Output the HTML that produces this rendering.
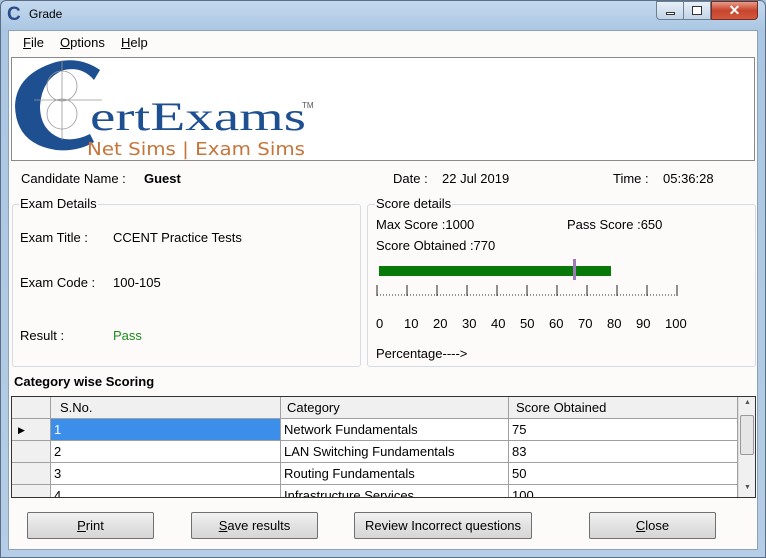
<!DOCTYPE html><html><head><style>
*{margin:0;padding:0;box-sizing:border-box}
body{width:766px;height:558px;overflow:hidden;background:#a9c4de;font-family:"Liberation Sans",sans-serif;font-size:13px;color:#000;position:relative}
.a{position:absolute;white-space:nowrap}
.frame{position:absolute;left:0;top:0;width:766px;height:558px;background:linear-gradient(180deg,#c4d9ee 0,#aac6e2 30px,#b5cde6 100%);border:1px solid #5b6f86;border-radius:6px 6px 0 0}
.client{position:absolute;left:8px;top:30px;width:750px;height:520px;background:#fdfafa;border:1px solid #8ea2b7}
.grp{position:absolute;border:1px solid #d5dbe3;border-radius:3px}
.btn{position:absolute;height:27px;border:1px solid #707070;border-radius:2px;background:linear-gradient(#f2f2f2,#e2e2e2 50%,#d6d6d6);text-align:center;line-height:25px;font-size:13px}
.cell{position:absolute;height:22px;border-right:1px solid #a0a0a0;border-bottom:1px solid #a0a0a0;padding-left:3px;line-height:22px;background:#fff}
</style></head><body>
<div class="frame"></div>
<div class="a" style="left:7px;top:4px;font-size:19px;font-weight:bold;color:#2a4d8a">C</div>
<div class="a" style="left:29px;top:7px;font-size:12px">Grade</div>
<div class="a" style="left:656px;top:1px;width:28px;height:19px;border:1px solid #6b7f95;border-radius:0 0 0 4px;background:linear-gradient(#e8f0f8,#c2d3e6)"><div class="a" style="left:9px;top:10px;width:9px;height:3px;border:1px solid #333;background:#fff"></div></div>
<div class="a" style="left:684px;top:1px;width:27px;height:19px;border:1px solid #6b7f95;border-left:0;background:linear-gradient(#e8f0f8,#c2d3e6)"><div class="a" style="left:8px;top:4px;width:10px;height:9px;border:1px solid #333;background:#fff"></div></div>
<div class="a" style="left:711px;top:1px;width:47px;height:19px;border:1px solid #7a2b20;border-radius:0 0 4px 0;background:linear-gradient(#e79a87,#c8442c 50%,#d05a3e);color:#fff;font-weight:bold;text-align:center;font-size:14px;line-height:17px">✕</div>
<div class="client"></div>
<div class="a" style="left:23px;top:35px"><u>F</u>ile</div>
<div class="a" style="left:60px;top:35px"><u>O</u>ptions</div>
<div class="a" style="left:121px;top:35px"><u>H</u>elp</div>
<div class="a" style="left:11px;top:57px;width:744px;height:104px;border:1px solid #8a8a8a;background:#fff"></div>
<svg class="a" style="left:12px;top:58px" width="310" height="102">
<path d="M88 12 Q68 -2 44 4 Q4 16 3 48 Q4 86 44 92 Q66 94 82 84 L78 76 Q62 84 48 80 Q28 72 28 48 Q30 20 52 12 Q70 8 82 22 Z" fill="#1d4f91"/>
<circle cx="50" cy="28" r="15" fill="none" stroke="#999" stroke-width=".8"/><circle cx="50" cy="56" r="15" fill="none" stroke="#999" stroke-width=".8"/>
<line x1="50" y1="2" x2="50" y2="82" stroke="#999" stroke-width=".8"/><line x1="22" y1="42" x2="90" y2="42" stroke="#999" stroke-width=".8"/>
<text x="78" y="72" font-family="Liberation Serif,serif" font-size="40" fill="#1d4f91" textLength="216" lengthAdjust="spacingAndGlyphs">ertExams</text>
<text x="290" y="50" font-size="8" fill="#555">TM</text>
<text x="75" y="97" font-family="DejaVu Sans,sans-serif" font-size="18" fill="#c6753a" textLength="218" lengthAdjust="spacingAndGlyphs">Net Sims | Exam Sims</text>
</svg>
<div class="a" style="left:21px;top:171px">Candidate Name :</div>
<div class="a" style="left:144px;top:171px;font-weight:bold">Guest</div>
<div class="a" style="left:393px;top:171px">Date :</div>
<div class="a" style="left:442px;top:171px">22 Jul 2019</div>
<div class="a" style="left:613px;top:171px">Time :</div>
<div class="a" style="left:663px;top:171px">05:36:28</div>
<div class="grp" style="left:12px;top:204px;width:349px;height:163px"></div>
<div class="a" style="left:19px;top:196px;background:#fdfafa;padding:0 1px">Exam Details</div>
<div class="a" style="left:20px;top:230px">Exam Title :</div><div class="a" style="left:113px;top:230px">CCENT Practice Tests</div>
<div class="a" style="left:20px;top:275px">Exam Code :</div><div class="a" style="left:113px;top:275px">100-105</div>
<div class="a" style="left:20px;top:328px">Result :</div><div class="a" style="left:113px;top:328px;color:#1b8a1b">Pass</div>
<div class="grp" style="left:367px;top:204px;width:389px;height:163px"></div>
<div class="a" style="left:375px;top:196px;background:#fdfafa;padding:0 1px">Score details</div>
<div class="a" style="left:376px;top:217px">Max Score :1000</div>
<div class="a" style="left:567px;top:217px">Pass Score :650</div>
<div class="a" style="left:376px;top:238px">Score Obtained :770</div>
<div class="a" style="left:379px;top:266px;width:232px;height:10px;background:#087808"></div>
<div class="a" style="left:573px;top:259px;width:3px;height:21px;background:#a07ab8"></div>
<svg class="a" style="left:375px;top:282px" width="305" height="16">
<line x1="2" y1="13" x2="302" y2="13" stroke="#333" stroke-dasharray="1 2"/>
<g stroke="#222"><line x1="2" y1="3" x2="2" y2="14"/><line x1="32" y1="3" x2="32" y2="14"/><line x1="62" y1="3" x2="62" y2="14"/><line x1="92" y1="3" x2="92" y2="14"/><line x1="122" y1="3" x2="122" y2="14"/><line x1="152" y1="3" x2="152" y2="14"/><line x1="182" y1="3" x2="182" y2="14"/><line x1="212" y1="3" x2="212" y2="14"/><line x1="242" y1="3" x2="242" y2="14"/><line x1="272" y1="3" x2="272" y2="14"/><line x1="302" y1="3" x2="302" y2="14"/></g></svg>
<div class="a" style="left:376px;top:316px">0</div>
<div class="a" style="left:404px;top:316px">10</div><div class="a" style="left:433px;top:316px">20</div><div class="a" style="left:462px;top:316px">30</div><div class="a" style="left:491px;top:316px">40</div><div class="a" style="left:520px;top:316px">50</div><div class="a" style="left:549px;top:316px">60</div><div class="a" style="left:578px;top:316px">70</div><div class="a" style="left:607px;top:316px">80</div><div class="a" style="left:636px;top:316px">90</div><div class="a" style="left:665px;top:316px">100</div>
<div class="a" style="left:376px;top:346px">Percentage----&gt;</div>
<div class="a" style="left:14px;top:374px;font-weight:bold">Category wise Scoring</div>
<div class="a" style="left:11px;top:396px;width:745px;height:102px;border:1px solid #333;background:#fff;overflow:hidden">
<div class="cell" style="left:0;top:0;width:39px;background:#f0f0f0"></div>
<div class="cell" style="left:39px;top:0;width:230px;background:#f0f0f0;padding-left:9px">S.No.</div>
<div class="cell" style="left:269px;top:0;width:228px;background:#f0f0f0;padding-left:6px">Category</div>
<div class="cell" style="left:497px;top:0;width:229px;background:#f0f0f0;padding-left:7px">Score Obtained</div>
<div class="cell" style="left:0;top:22px;width:39px;background:#f0f0f0;font-size:9px;padding-left:6px">▶</div>
<div class="cell" style="left:39px;top:22px;width:230px;background:#3b8fea;color:#fff">1</div>
<div class="cell" style="left:269px;top:22px;width:228px">Network Fundamentals</div>
<div class="cell" style="left:497px;top:22px;width:229px">75</div>
<div class="cell" style="left:0;top:44px;width:39px;background:#f0f0f0"></div>
<div class="cell" style="left:39px;top:44px;width:230px">2</div><div class="cell" style="left:269px;top:44px;width:228px">LAN Switching Fundamentals</div><div class="cell" style="left:497px;top:44px;width:229px">83</div>
<div class="cell" style="left:0;top:66px;width:39px;background:#f0f0f0"></div>
<div class="cell" style="left:39px;top:66px;width:230px">3</div><div class="cell" style="left:269px;top:66px;width:228px">Routing Fundamentals</div><div class="cell" style="left:497px;top:66px;width:229px">50</div>
<div class="cell" style="left:0;top:88px;width:39px;background:#f0f0f0"></div>
<div class="cell" style="left:39px;top:88px;width:230px">4</div><div class="cell" style="left:269px;top:88px;width:228px">Infrastructure Services</div><div class="cell" style="left:497px;top:88px;width:229px">100</div>
<div class="a" style="left:726px;top:0;width:17px;height:100px;background:#f0f0f0;border-left:1px solid #ddd"><div class="a" style="left:5px;top:2px;font-size:7px;color:#555">▲</div><div class="a" style="left:1px;top:18px;width:14px;height:40px;border:1px solid #999;border-radius:2px;background:#e6e6e6"></div><div class="a" style="left:5px;top:87px;font-size:7px;color:#555">▼</div></div>
</div>
<div class="btn" style="left:27px;top:512px;width:127px"><u>P</u>rint</div>
<div class="btn" style="left:191px;top:512px;width:127px"><u>S</u>ave results</div>
<div class="btn" style="left:354px;top:512px;width:178px">Review Incorrect questions</div>
<div class="btn" style="left:589px;top:512px;width:127px"><u>C</u>lose</div>
</body></html>
